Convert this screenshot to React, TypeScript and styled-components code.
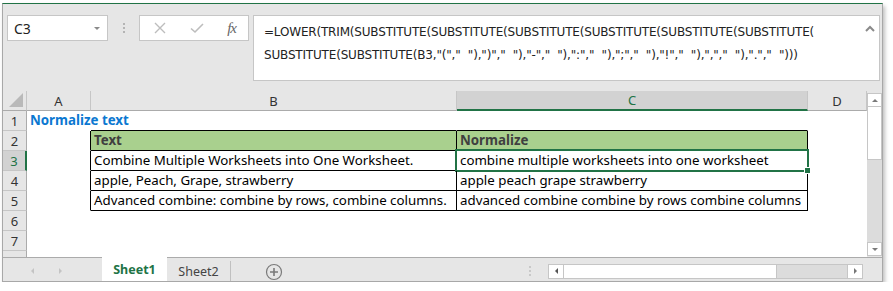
import React from "react";
import styled, { createGlobalStyle } from "styled-components";

const GlobalStyle = createGlobalStyle`
  body {
    margin: 0;
    background: #ffffff;
    font-family: "Noto Sans", "Liberation Sans", sans-serif;
  }
`;

const FORMULA_1 =
  "=LOWER(TRIM(SUBSTITUTE(SUBSTITUTE(SUBSTITUTE(SUBSTITUTE(SUBSTITUTE(SUBSTITUTE(";
const FORMULA_2 =
  'SUBSTITUTE(SUBSTITUTE(B3,"(","  "),")","  "),"-","  "),":","  "),";","  "),"!","  "),",","  "),".","  ")))';

const COLUMNS = ["A", "B", "C", "D"];

// table contents, rows 2..5
const TABLE = [
  ["Text", "Normalize"],
  ["Combine Multiple Worksheets into One Worksheet.", "combine multiple worksheets into one worksheet"],
  ["apple, Peach, Grape, strawberry", "apple peach grape strawberry"],
  ["Advanced combine: combine by rows, combine columns.", "advanced combine combine by rows combine columns"],
];

const Arrow = ({ dir, color = "#7a7a7a" }: { dir: "up" | "down" | "left" | "right"; color?: string }) => {
  const pts = {
    up: "1,6 4,3 7,6",
    down: "1,3 4,6 7,3",
    left: "6,1 3,4 6,7",
    right: "3,1 6,4 3,7",
  }[dir];
  return (
    <svg width="8" height="8" viewBox="0 0 8 8" style={{ display: "block" }}>
      <polygon points={pts} fill={color} />
    </svg>
  );
};

export default function App() {
  return (
    <>
      <GlobalStyle />
      <Window>
        <FormulaArea>
          <NameBox>
            <span>C3</span>
            <Arrow dir="down" color="#8a8a8a" />
          </NameBox>
          <Grip>
            <i />
            <i />
            <i />
          </Grip>
          <FxBox>
            <svg width="12" height="12" viewBox="0 0 12 12">
              <path d="M1 1 L11 11 M11 1 L1 11" stroke="#bdbdbd" strokeWidth="1.4" fill="none" />
            </svg>
            <svg width="14" height="12" viewBox="0 0 14 12">
              <path d="M1 6.5 L5 10 L13 2" stroke="#bdbdbd" strokeWidth="1.6" fill="none" />
            </svg>
            <FxLabel>fx</FxLabel>
          </FxBox>
          <FormulaInput>
            <FormulaText>
              <div>{FORMULA_1}</div>
              <div>{FORMULA_2}</div>
            </FormulaText>
            <Collapse>
              <svg width="10" height="7" viewBox="0 0 10 7">
                <path d="M1 6 L5 2 L9 6" stroke="#8a8a8a" strokeWidth="2" fill="none" />
              </svg>
            </Collapse>
          </FormulaInput>
        </FormulaArea>

        <SheetPane>
          <Grid>
            <Corner>
              <svg width="14" height="14" viewBox="0 0 14 14">
                <polygon points="14,0 14,14 0,14" fill="#b9b9b9" />
              </svg>
            </Corner>
            {COLUMNS.map((c) => (
              <ColHead key={c} $active={c === "C"}>
                {c}
              </ColHead>
            ))}

            {Array.from({ length: 8 }, (_, i) => {
              const row = i + 1;
              const tr = row >= 2 && row <= 5 ? TABLE[row - 2] : null;
              return (
                <React.Fragment key={row}>
                  {/* row 8 is only a sliver under the tab bar */}
                  <RowHead $active={row === 3}>{row < 8 ? row : ""}</RowHead>
                  <Cell $right={tr ? "#000" : undefined}>
                    {row === 1 && <Title>Normalize text</Title>}
                  </Cell>
                  <Cell
                    $head={row === 2}
                    $right={tr ? "#000" : undefined}
                    $bottom={row >= 1 && row <= 5 ? "#000" : undefined}
                  >
                    {tr && tr[0]}
                  </Cell>
                  <Cell
                    $head={row === 2}
                    $selected={row === 3}
                    $right={tr ? "#000" : undefined}
                    $bottom={row >= 1 && row <= 5 ? "#000" : undefined}
                  >
                    {tr && tr[1]}
                  </Cell>
                  <Cell />
                </React.Fragment>
              );
            })}
          </Grid>

          <VScroll>
            <ScrollBtn>
              <Arrow dir="up" />
            </ScrollBtn>
            <VThumb />
            <VTrack />
            <ScrollBtn>
              <Arrow dir="down" />
            </ScrollBtn>
          </VScroll>
        </SheetPane>

        <TabBar>
          <TabNav>
            <Arrow dir="left" color="#c4c4c4" />
            <Arrow dir="right" color="#c4c4c4" />
          </TabNav>
          <Tab $active>Sheet1</Tab>
          <Tab>Sheet2</Tab>
          <AddSheet>
            <svg width="18" height="18" viewBox="0 0 18 18">
              <circle cx="9" cy="9" r="7.5" stroke="#7a7a7a" strokeWidth="1.2" fill="none" />
              <path d="M9 5 V13 M5 9 H13" stroke="#7a7a7a" strokeWidth="1.6" />
            </svg>
          </AddSheet>
          <Spacer />
          <Grip $light>
            <i />
            <i />
            <i />
          </Grip>
          <HScroll>
            <HBtn>
              <Arrow dir="left" color="#555" />
            </HBtn>
            <HThumb />
            <HTrack />
            <HBtn $end>
              <Arrow dir="right" color="#777" />
            </HBtn>
          </HScroll>
        </TabBar>
      </Window>
    </>
  );
}

const Window = styled.div`
  margin: 3px 0 0 2px;
  width: 881px;
  height: 279px;
  box-sizing: border-box;
  border: 1px solid #a8a8a8;
  border-top: 1px solid #217346;
  background: #e6e6e6;
  box-shadow: 2px 3px 4px rgba(0, 0, 0, 0.25);
  display: flex;
  flex-direction: column;
  overflow: hidden;
`;

const FormulaArea = styled.div`
  height: 87px;
  flex: none;
  box-sizing: border-box;
  padding: 11px 2px 0 4px;
  display: flex;
  align-items: flex-start;
`;

const NameBox = styled.div`
  width: 101px;
  height: 26px;
  box-sizing: border-box;
  border: 1px solid #c6c6c6;
  background: #fff;
  display: flex;
  align-items: center;
  justify-content: space-between;
  padding: 0 6px 0 6px;
  font-size: 14px;
  color: #222;
`;

const Grip = styled.div<{ $light?: boolean }>`
  width: ${(p) => (p.$light ? "30px" : "31px")};
  height: 26px;
  align-self: ${(p) => (p.$light ? "center" : "flex-start")};
  display: flex;
  flex-direction: column;
  align-items: center;
  justify-content: center;
  gap: 2px;

  i {
    width: 2px;
    height: 2px;
    background: ${(p) => (p.$light ? "#c8c8c8" : "#b4b4b4")};
  }
`;

const FxBox = styled.div`
  width: 110px;
  height: 26px;
  box-sizing: border-box;
  border: 1px solid #c6c6c6;
  background: #fff;
  display: flex;
  align-items: center;
  justify-content: space-between;
  padding: 0 12px 0 14px;
`;

const FxLabel = styled.span`
  font-family: "Liberation Serif", serif;
  font-style: italic;
  font-size: 15px;
  color: #666;
  letter-spacing: -1px;
`;

const FormulaInput = styled.div`
  flex: 1;
  margin-left: 4px;
  height: 66px;
  box-sizing: border-box;
  border: 1px solid #c6c6c6;
  background: #fff;
  display: flex;
  justify-content: space-between;
  align-items: flex-start;
  padding: 5px 4px 0 10px;
`;

const FormulaText = styled.div`
  font-family: "DejaVu Sans", "Liberation Sans", sans-serif;
  font-size: 12px;
  line-height: 23px;
  color: #222;
  white-space: pre;
  letter-spacing: -0.18px;
`;

const Collapse = styled.div`
  display: flex;
  padding-top: 4px;
`;

const SheetPane = styled.div`
  height: 166px;
  flex: none;
  display: flex;
  background: #fff;
`;

const Grid = styled.div`
  display: grid;
  grid-template-columns: 24px 64px 366px 351px 59px;
  grid-auto-rows: 20px;
  align-content: start;
  overflow: hidden;
  height: 166px;
`;

const Corner = styled.div`
  background: #e6e6e6;
  box-sizing: border-box;
  border-right: 1px solid #c6c6c6;
  border-bottom: 1px solid #ababab;
  display: flex;
  align-items: flex-end;
  justify-content: flex-end;
  padding: 0 3px 3px 0;
`;

const ColHead = styled.div<{ $active?: boolean }>`
  box-sizing: border-box;
  background: ${(p) => (p.$active ? "#d2d2d2" : "#e6e6e6")};
  border-right: 1px solid #c6c6c6;
  border-bottom: ${(p) => (p.$active ? "2px solid #217346" : "1px solid #ababab")};
  color: ${(p) => (p.$active ? "#217346" : "#333")};
  font-size: 13px;
  display: flex;
  align-items: center;
  justify-content: center;
`;

const RowHead = styled.div<{ $active?: boolean }>`
  box-sizing: border-box;
  background: ${(p) => (p.$active ? "#d2d2d2" : "#e6e6e6")};
  border-right: ${(p) => (p.$active ? "2px solid #217346" : "1px solid #ababab")};
  border-bottom: 1px solid #c6c6c6;
  color: ${(p) => (p.$active ? "#217346" : "#333")};
  font-size: 13px;
  display: flex;
  align-items: center;
  justify-content: center;
`;

const Cell = styled.div<{ $right?: string; $bottom?: string; $head?: boolean; $selected?: boolean }>`
  position: relative;
  box-sizing: border-box;
  border-right: 1px solid ${(p) => p.$right || "transparent"};
  border-bottom: 1px solid ${(p) => p.$bottom || "transparent"};
  background: ${(p) => (p.$head ? "#a9d08e" : "transparent")};
  color: ${(p) => (p.$head ? "#3f3f3f" : "#000")};
  font-weight: ${(p) => (p.$head ? 700 : 400)};
  font-size: 13.3px;
  line-height: 19px;
  padding: 0 3px;
  white-space: nowrap;
  overflow: visible;

  ${(p) =>
    p.$selected &&
    `
    &::after {
      content: "";
      position: absolute;
      left: -2px;
      top: -2px;
      right: -2px;
      bottom: -2px;
      border: 2px solid #217346;
    }
    &::before {
      content: "";
      position: absolute;
      right: -4px;
      bottom: -4px;
      width: 5px;
      height: 5px;
      background: #217346;
      border: 1px solid #fff;
      z-index: 1;
    }
  `}
`;

const Title = styled.span`
  color: #0b78d1;
  font-weight: 700;
`;

const VScroll = styled.div`
  width: 15px;
  flex: none;
  background: #e6e6e6;
  display: flex;
  flex-direction: column;
  padding: 2px 0 1px;
  box-sizing: border-box;
`;

const ScrollBtn = styled.div`
  height: 14px;
  box-sizing: border-box;
  border: 1px solid #c6c6c6;
  background: #fff;
  display: flex;
  align-items: center;
  justify-content: center;
`;

const VThumb = styled.div`
  height: 53px;
  box-sizing: border-box;
  border: 1px solid #c6c6c6;
  border-top: none;
  background: #fff;
`;

const VTrack = styled.div`
  flex: 1;
  background: #dcdcdc;
`;

const TabBar = styled.div`
  flex: 1;
  display: flex;
  align-items: stretch;
  border-top: 1px solid #ababab;
  background: #e6e6e6;
  font-size: 12.5px;
`;

const TabNav = styled.div`
  width: 99px;
  display: flex;
  align-items: center;
  gap: 20px;
  padding-left: 25px;
  box-sizing: border-box;
`;

const Tab = styled.div<{ $active?: boolean }>`
  width: ${(p) => (p.$active ? "65px" : "64px")};
  box-sizing: border-box;
  margin-top: ${(p) => (p.$active ? "-1px" : "0")};
  background: ${(p) => (p.$active ? "#fff" : "transparent")};
  border-bottom: ${(p) => (p.$active ? "3px solid #217346" : "none")};
  border-right: ${(p) => (p.$active ? "none" : "1px solid #c0c0c0")};
  color: ${(p) => (p.$active ? "#217346" : "#444")};
  font-weight: ${(p) => (p.$active ? 700 : 400)};
  display: flex;
  align-items: center;
  justify-content: center;
  ${(p) => !p.$active && "margin: 3px 0 3px;"}
`;

const AddSheet = styled.div`
  width: 52px;
  display: flex;
  align-items: center;
  justify-content: flex-end;
  padding-top: 1px;
`;

const Spacer = styled.div`
  flex: 1;
`;

const HScroll = styled.div`
  width: 315px;
  height: 15px;
  align-self: center;
  margin: 0 19px 0 3px;
  box-sizing: border-box;
  border: 1px solid #c6c6c6;
  display: flex;
  background: #dcdcdc;
`;

const HBtn = styled.div<{ $end?: boolean }>`
  width: 14px;
  background: #fff;
  border-right: ${(p) => (p.$end ? "none" : "1px solid #c6c6c6")};
  border-left: ${(p) => (p.$end ? "1px solid #c6c6c6" : "none")};
  display: flex;
  align-items: center;
  justify-content: center;
`;

const HThumb = styled.div`
  width: 212px;
  background: #fff;
  border-right: 1px solid #c6c6c6;
`;

const HTrack = styled.div`
  flex: 1;
`;
